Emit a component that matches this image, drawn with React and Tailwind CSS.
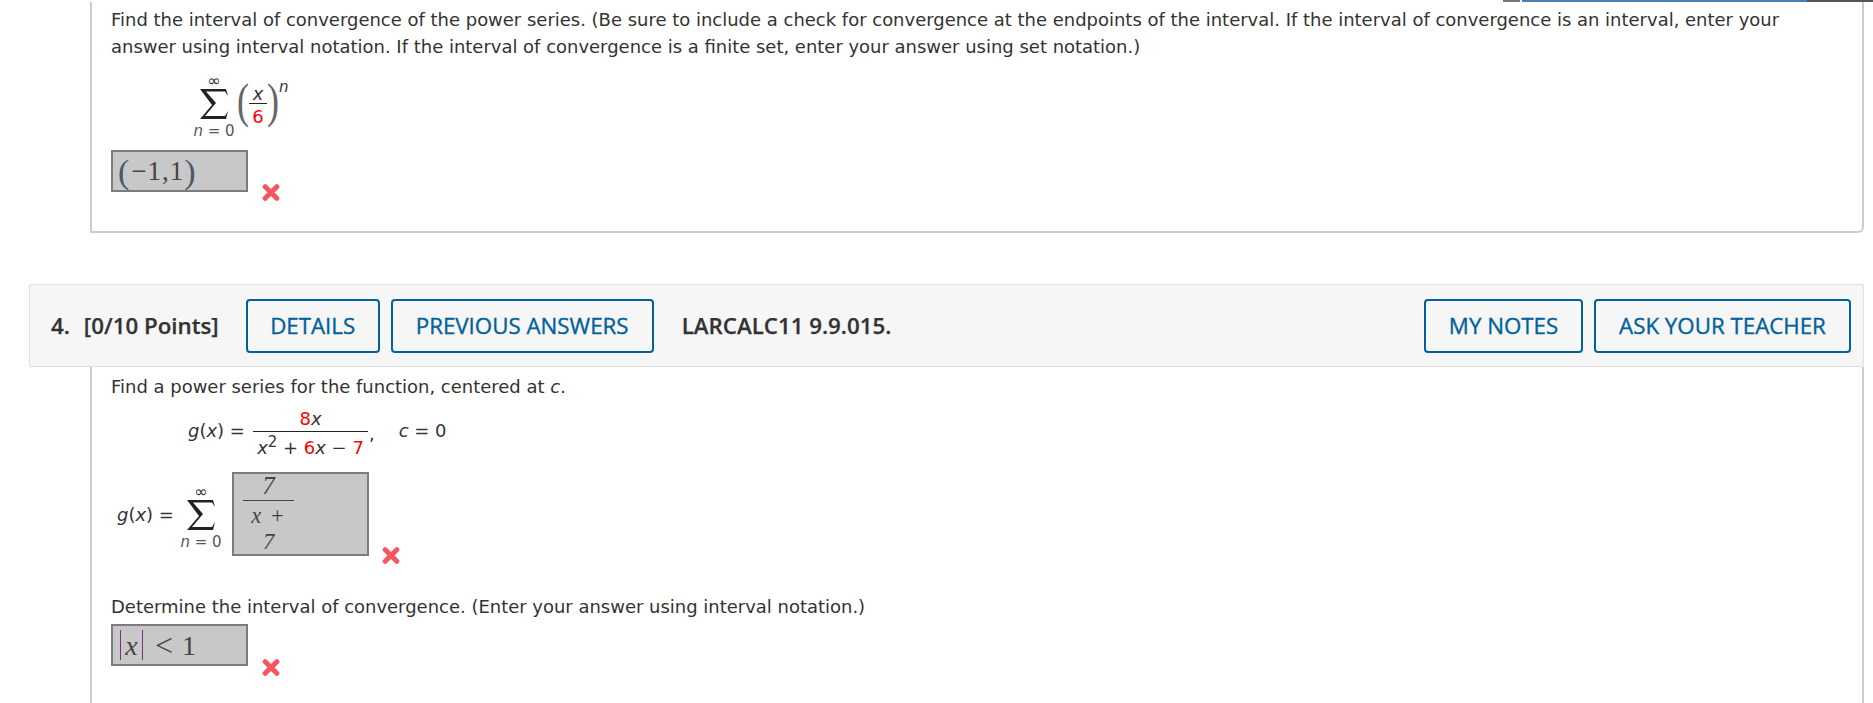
import React from "react";

const sans = "font-['DejaVu_Sans',Verdana,sans-serif]";
const serif = "font-['Liberation_Serif',serif]";

function Cross({ className = "" }) {
  return (
    <svg viewBox="0 0 18 18" className={`w-[18px] h-[19px] shrink-0 ${className}`}>
      <path d="M3.2 3.2 L14.8 14.8 M14.8 3.2 L3.2 14.8" stroke="#f5565e" strokeWidth="5" strokeLinecap="round" fill="none" />
    </svg>
  );
}

function Sigma({ w = "w-[44px]" }) {
  return (
    <div className={`flex flex-col items-center ${w} text-[#333]`}>
      <span className="text-[16px] leading-[11px] h-[11px]">∞</span>
      <svg viewBox="0 0 30 32" className="w-[30px] h-[32px] mt-[2px]">
        <path d="M1 1 H27 L29 8 L26 3.5 H7 L17 15 L6 28 H26 L29 23 L27 31 H1 L13 17 Z" fill="#222" />
      </svg>
      <span className="text-[15px] leading-[16px] mt-[3px] whitespace-nowrap text-[#555]"><i>n</i> = 0</span>
    </div>
  );
}

function Btn({ children, className = "" }) {
  return (
    <div className={`h-[54px] flex items-center justify-center border-2 border-[#00629b] rounded-[4px] text-[#00629b] text-[22.3px] font-medium [-webkit-text-stroke:0.35px_#00629b] whitespace-nowrap ${className}`}>
      {children}
    </div>
  );
}

function AnswerBox({ children, className = "" }) {
  return (
    <div className={`w-[137px] h-[42px] bg-[#c8c8c8] border-2 border-[#7c7c7c] ${serif} text-[#444] flex items-center whitespace-nowrap ${className}`}>
      {children}
    </div>
  );
}

export default function App() {
  return (
    <div className={`w-[1873px] h-[703px] overflow-hidden bg-white ${sans} text-[17.98px] leading-[27px] text-[#333]`}>
      <div className="h-[2px] flex justify-end">
        <div className="w-[17px] bg-[#777] mr-[2px]" />
        <div className="w-[285px] bg-[#4a7fb5]" />
        <div className="w-[66px] bg-[#555]" />
      </div>

      <div className="ml-[90px] w-[1774px] h-[231px] border-x-2 border-b-2 border-[#cccccc] rounded-br-[6px] pl-[19px] pt-[4px]">
        <p className="w-[1700px]">
          Find the interval of convergence of the power series. (Be sure to include a check for convergence at the endpoints of the interval. If the interval of convergence is an interval, enter your answer using interval notation. If the interval of convergence is a finite set, enter your answer using set notation.)
        </p>
        <div className="flex items-start ml-[81px] mt-[15px] h-[75px]">
          <Sigma w="w-[44px]" />
          <span className={`${serif} text-[36px] leading-[40px] text-[#666] mt-[6px] ml-[1px] scale-y-[1.35]`}>(</span>
          <div className="flex flex-col items-center w-[18px] mt-[9px]">
            <i className="leading-[19px]">x</i>
            <span className="border-t border-[#222] w-full text-center text-[#f00] leading-[25px]">6</span>
          </div>
          <span className={`${serif} text-[36px] leading-[40px] text-[#666] mt-[6px] scale-y-[1.35]`}>)</span>
          <i className="text-[15px] leading-none mt-[5px]">n</i>
        </div>
        <div className="flex items-start">
          <AnswerBox className="pl-[5px] text-[27px]">
            <span className="text-[34px] text-[#4a5a6a]">(</span>
            <span className="tracking-[1px] ml-[2px]">−1,1</span>
            <span className="text-[34px] text-[#4a5a6a]">)</span>
          </AnswerBox>
          <Cross className="ml-[14px] mt-[33px]" />
        </div>
      </div>

      <div className="mt-[51px] ml-[29px] w-[1835px] h-[83px] bg-[#f6f6f6] border border-[#e0e0e0] rounded-[2px] flex items-center font-['Open_Sans',sans-serif] pl-[21px] pr-[12px]">
        <span className="text-[22.3px] font-semibold text-[#333] whitespace-pre [-webkit-text-stroke:0.25px_#333]">4.</span>
        <span className="text-[22.3px] font-semibold text-[#333] whitespace-pre ml-[14px] [-webkit-text-stroke:0.25px_#333]">[0/10 Points]</span>
        <Btn className="w-[134px] ml-[27px]">DETAILS</Btn>
        <Btn className="w-[263px] ml-[11px]">PREVIOUS ANSWERS</Btn>
        <span className="text-[22.3px] font-semibold text-[#333] ml-[28px] [-webkit-text-stroke:0.25px_#333]">LARCALC11 9.9.015.</span>
        <Btn className="w-[159px] ml-auto">MY NOTES</Btn>
        <Btn className="w-[257px] ml-[11px]">ASK YOUR TEACHER</Btn>
      </div>

      <div className="ml-[90px] w-[1774px] h-[340px] border-x-2 border-[#cccccc] pl-[19px] pt-[6px]">
        <p>Find a power series for the function, centered at <i>c</i>.</p>
        <div className="flex items-center ml-[77px] mt-[6px] h-[52px]">
          <span className="w-[65px] whitespace-nowrap mb-[3px]"><i>g</i>(<i>x</i>) =</span>
          <div className="flex flex-col items-center w-[115px]">
            <span className="h-[26px] leading-[26px] border-b border-[#222] w-full text-center"><span className="text-[#f00]">8</span><i>x</i></span>
            <span className="h-[26px] leading-[26px] pt-[3px] whitespace-nowrap"><i>x</i><sup className="text-[15px]">2</sup> + <span className="text-[#f00]">6</span><i>x</i> − <span className="text-[#f00]">7</span></span>
          </div>
          <span className="ml-[1px] mt-[2px]">,</span>
          <span className="ml-[24px] whitespace-nowrap mb-[3px]"><i>c</i> = 0</span>
        </div>
        <div className="flex items-start mt-[14px]">
          <span className="w-[65px] pl-[6px] mt-[29px] whitespace-nowrap"><i>g</i>(<i>x</i>) =</span>
          <div className="mt-[14px]"><Sigma w="w-[50px]" /></div>
          <div className={`w-[137px] h-[84px] ml-[6px] bg-[#c8c8c8] border-2 border-[#7c7c7c] ${serif} text-[#444] text-[25px]`}>
            <div className="w-[51px] ml-[9px] flex flex-col items-center">
              <span className="h-[27px] leading-[24px] w-full text-center border-b border-[#444]"><i>7</i></span>
              <span className="mt-[2px] text-[22.5px] leading-[26px] whitespace-nowrap tracking-[2px]"><i>x</i> +</span>
              <i className="text-[22.5px] leading-[26px]">7</i>
            </div>
          </div>
          <Cross className="ml-[13px] mt-[74px]" />
        </div>
        <p className="mt-[28px]">Determine the interval of convergence. (Enter your answer using interval notation.)</p>
        <div className="flex items-start mt-[4px]">
          <AnswerBox className="pl-[7px] text-[28px]">
            <span className="border-x border-[#7b2d8b] h-[30px] w-[23px] flex items-center justify-center"><i>x</i></span>
            <span className="ml-[12px] text-[32px]">&lt;</span>
            <span className="ml-[9px]">1</span>
          </AnswerBox>
          <Cross className="ml-[14px] mt-[34px]" />
        </div>
      </div>
    </div>
  );
}
